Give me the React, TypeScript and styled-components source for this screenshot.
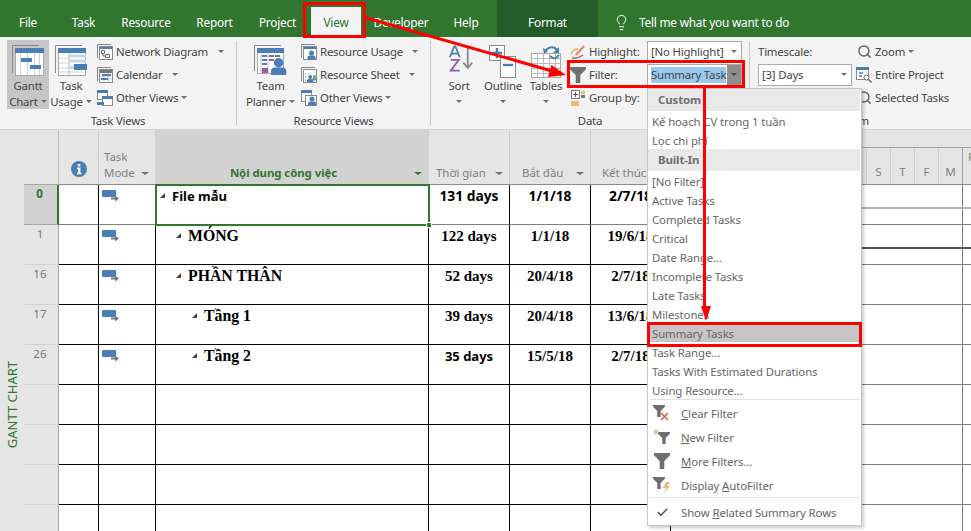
import React from "react";
import styled, { createGlobalStyle } from "styled-components";
import { Check, Lightbulb, Search } from "lucide-react";

const GREEN = "#31752f";
const BLUE = "#4a7eb5";
const GRAY = "#6f6f6f";

const GlobalStyle = createGlobalStyle`
    html, body { margin: 0; padding: 0; background: #fff; }
    * { box-sizing: border-box; }
`;

const Page = styled.div`
    position: relative;
    width: 971px;
    height: 531px;
    overflow: hidden;
    font-family: "Noto Sans", "Open Sans", sans-serif;
    font-size: 11.4px;
    letter-spacing: -0.2px;
    color: #444;
`;

/* ---------- tabs ---------- */

const TabBar = styled.div`
    display: flex;
    height: 37px;
    background: ${GREEN};
`;

const Tab = styled.div<{ $width: number; $active?: boolean; $dark?: boolean; $gap?: number }>`
    width: ${p => p.$width}px;
    margin-left: ${p => p.$gap || 0}px;
    margin-top: ${p => (p.$active ? 7 : 0)}px;
    padding-top: ${p => (p.$active ? 7 : 14)}px;
    text-align: center;
    line-height: 16px;
    font-size: 11.8px;
    color: ${p => (p.$active ? GREEN : "#fff")};
    background: ${p => (p.$active ? "#f3f3f3" : p.$dark ? "#235c2a" : "transparent")};
`;

const TellMe = styled.div`
    display: flex;
    align-items: center;
    gap: 9px;
    margin-left: 15px;
    padding-top: 7px;
    height: 37px;
    color: #fff;
    font-size: 11.8px;
`;

/* ---------- ribbon ---------- */

const Ribbon = styled.div`
    display: flex;
    height: 93px;
    padding-top: 3px;
    background: #f3f3f3;
    border-bottom: 1px solid #d4d4d4;
`;

const Group = styled.div<{ $width: number }>`
    display: flex;
    flex-direction: column;
    width: ${p => p.$width}px;
`;

const GroupBody = styled.div<{ $pad: number }>`
    display: flex;
    height: 69px;
    padding-left: ${p => p.$pad}px;
`;

const GroupLabel = styled.div`
    margin-top: 4px;
    line-height: 16px;
    text-align: center;
    white-space: nowrap;
`;

const Divider = styled.div`
    width: 1px;
    height: 84px;
    margin-top: 1px;
    background: #c8c8c8;
`;

const LargeButton = styled.div<{ $width: number; $active?: boolean; $gap?: number }>`
    display: flex;
    flex-direction: column;
    align-items: center;
    flex: none;
    width: ${p => p.$width}px;
    height: 69px;
    margin-right: ${p => p.$gap || 0}px;
    padding-top: 5px;
    background: ${p => (p.$active ? "#c6c6c6" : "transparent")};
`;

const IconSlot = styled.div<{ $shift?: number }>`
    display: flex;
    align-items: flex-start;
    justify-content: center;
    height: 33px;
    padding-left: ${p => p.$shift || 0}px;
`;

const ButtonLine = styled.div`
    display: flex;
    align-items: center;
    justify-content: center;
    height: 16px;
    white-space: nowrap;
`;

const Caret = styled.span<{ $gap?: number; $color?: string; $size?: number }>`
    display: inline-block;
    flex: none;
    margin-left: ${p => p.$gap ?? 3}px;
    border-left: ${p => p.$size || 3}px solid transparent;
    border-right: ${p => p.$size || 3}px solid transparent;
    border-top: ${p => (p.$size ? p.$size - 1 : 3)}px solid ${p => p.$color || GRAY};
`;

const SmallList = styled.div`
    display: flex;
    flex-direction: column;
`;

const SmallItem = styled.div`
    display: flex;
    align-items: center;
    gap: 3px;
    height: 23px;
    white-space: nowrap;
`;

const IconBox = styled.span`
    display: flex;
    align-items: center;
    justify-content: center;
    flex: none;
    width: 16px;
    height: 16px;
`;

const FormRow = styled.div`
    display: flex;
    align-items: center;
    height: 23px;
`;

const FormIcon = styled.span`
    display: flex;
    justify-content: center;
    flex: none;
    width: 18px;
    margin-left: 2px;
`;

const FormLabel = styled.span`
    flex: none;
    width: 58px;
    margin-left: 2px;
`;

const Combo = styled.div<{ $width: number }>`
    display: flex;
    align-items: center;
    justify-content: space-between;
    flex: none;
    width: ${p => p.$width}px;
    height: 22px;
    padding-left: 3px;
    background: #fff;
    border: 1px solid #ababab;
    white-space: nowrap;
`;

const ComboCaretBox = styled.span<{ $active?: boolean }>`
    display: flex;
    align-items: center;
    justify-content: center;
    flex: none;
    align-self: stretch;
    width: 14px;
    background: ${p => (p.$active ? "#8e8e8e" : "transparent")};
`;

const Selection = styled.span`
    background: #99c9ef;
    line-height: 16px;
    white-space: nowrap;
`;

const Column = styled.div<{ $width?: number; $gap?: number }>`
    display: flex;
    flex-direction: column;
    flex: none;
    width: ${p => (p.$width ? `${p.$width}px` : "auto")};
    margin-right: ${p => p.$gap || 0}px;
`;

/* ---------- sheet ---------- */

const Sheet = styled.div`
    display: flex;
    height: 401px;
`;

const SideStrip = styled.div`
    display: flex;
    justify-content: center;
    align-items: flex-end;
    flex: none;
    width: 24px;
    padding-bottom: 83px;
    background: #e5e5e5;
`;

const SideText = styled.div`
    writing-mode: vertical-rl;
    transform: rotate(180deg);
    color: ${GREEN};
    font-size: 13px;
    letter-spacing: 0;
    line-height: 14px;
    white-space: nowrap;
`;

const Table = styled.div`
    display: grid;
    grid-template-columns: 35px 40px 57px 273px 81px 81px 80px;
    grid-auto-rows: 40px;
    grid-template-rows: 55px;
    flex: none;
    width: 647px;
    background: #fff;
    letter-spacing: 0;
`;

const HeadCell = styled.div<{ $pad?: number; $active?: boolean }>`
    display: flex;
    flex-direction: column;
    justify-content: flex-end;
    padding: 0 6px 3px ${p => p.$pad ?? 5}px;
    background: ${p => (p.$active ? "#d2d2d2" : "#e5e5e5")};
    border-right: 1px solid #d0d0d0;
    border-bottom: 1px solid #8c8c8c;
    color: #7f7f7f;
    line-height: 16px;
    font-size: 11.5px;
    letter-spacing: -0.05px;
`;

const CornerCell = styled(HeadCell)`
    border-right: 1px solid #bdbdbd;
    border-bottom: 1px solid #a6a6a6;
`;

const InfoCell = styled(HeadCell)`
    align-items: center;
    padding: 0 0 7px;
`;

const HeadLine = styled.div`
    display: flex;
    align-items: center;
    justify-content: space-between;
    white-space: nowrap;
`;

const NameHeading = styled.span`
    flex: 1;
    text-align: center;
    color: ${GREEN};
    font-weight: 700;
    font-size: 11.4px;
`;

const RowHead = styled.div<{ $selected?: boolean; $last?: boolean }>`
    padding-right: 2px;
    text-align: center;
    line-height: 18px;
    font-size: 11.6px;
    font-weight: ${p => (p.$selected ? 700 : 400)};
    color: ${p => (p.$selected ? GREEN : "#7a7a7a")};
    background: ${p => (p.$selected ? "#d2d2d2" : "#e5e5e5")};
    border-right: ${p => (p.$selected ? `2px solid ${GREEN}` : "1px solid #a6a6a6")};
    border-bottom: 1px solid ${p => (p.$selected ? "#a6a6a6" : "#d0d0d0")};
`;

const Cell = styled.div<{ $soft?: boolean }>`
    border-right: 1px solid #000;
    border-bottom: 1px solid ${p => (p.$soft ? "#808080" : "#000")};
`;

const ModeCell = styled(Cell)`
    padding: 5px 0 0 3px;
`;

const ValueCell = styled(Cell)<{ $font: "sans" | "serif" | "small" }>`
    text-align: center;
    line-height: 22px;
    white-space: nowrap;
    color: #000;
    font-weight: 700;
    font-family: ${p => (p.$font === "serif" ? '"Liberation Serif", serif' : '"Noto Sans", sans-serif')};
    font-size: ${p => (p.$font === "serif" ? 15 : p.$font === "small" ? 13 : 13.8)}px;
`;

const NameCell = styled(Cell)<{ $level: number; $selected?: boolean; $serif?: boolean }>`
    position: relative;
    display: flex;
    align-items: flex-start;
    padding-left: ${p => 4 + p.$level * 16}px;
    line-height: 22px;
    color: #000;
    font-weight: 700;
    font-family: ${p => (p.$serif ? '"Liberation Serif", serif' : '"Noto Sans", sans-serif')};
    font-size: ${p => (p.$serif ? 15.8 : 13)}px;
    ${p => (p.$selected ? `outline: 2px solid ${GREEN}; outline-offset: -1px; z-index: 1;` : "")}
`;

const FillHandle = styled.span`
    position: absolute;
    right: -4px;
    bottom: -4px;
    width: 6px;
    height: 6px;
    background: ${GREEN};
    border: 1px solid #fff;
`;

const Twist = styled.span`
    flex: none;
    width: 5px;
    height: 5px;
    margin: 8px 7px 0 0;
    background: #444;
    clip-path: polygon(100% 0, 100% 100%, 0 100%);
`;

/* ---------- gantt ---------- */

const Gantt = styled.div`
    flex: 1;
    display: flex;
    flex-direction: column;
    min-width: 0;
`;

const GanttTier = styled.div`
    height: 18px;
    background: #e5e5e5;
    border-bottom: 1px solid #a0a0a0;
    flex: none;
`;

const DayRow = styled.div`
    display: flex;
    justify-content: flex-end;
    flex: none;
    height: 37px;
    background: #e5e5e5;
    border-bottom: 1px solid #8c8c8c;
    color: #7f7f7f;
    font-size: 11.6px;
    letter-spacing: 0;
`;

const Day = styled.div`
    width: 24px;
    padding-top: 16px;
    text-align: center;
    line-height: 16px;
    border-left: 1px solid #cfcfcf;
`;

const WeekStart = styled.div`
    width: 9px;
    padding: 1px 0 0 5px;
    line-height: 16px;
    overflow: hidden;
    border-left: 1px solid #a0a0a0;
`;

const GanttBody = styled.div`
    flex: 1;
    background: linear-gradient(#7f7f7f, #7f7f7f) no-repeat right 8px top / 1px 100%;
`;

const GanttRow = styled.div`
    height: 40px;
    padding-top: 22px;
    border-bottom: 1px solid #808080;
`;

const SummaryBar = styled.div<{ $color: string }>`
    height: 2px;
    background: ${p => p.$color};
`;

/* ---------- filter menu ---------- */

const Menu = styled.div`
    position: absolute;
    left: 647px;
    top: 88px;
    z-index: 2;
    width: 215px;
    height: 438px;
    background: #fff;
    border: 1px solid #c6c6c6;
    box-shadow: 2px 2px 3px rgba(0, 0, 0, 0.2);
    color: #666;
    font-size: 11.4px;
    letter-spacing: -0.1px;
`;

const MenuHead = styled.div`
    height: 22px;
    margin-right: 1px;
    padding-left: 10px;
    line-height: 22px;
    font-weight: 700;
    color: #6e6e6e;
    background: #e9e9e9;
`;

const MenuItem = styled.div<{ $active?: boolean }>`
    height: 19px;
    padding-left: 4px;
    line-height: 21px;
    white-space: nowrap;
    background: ${p => (p.$active ? "#c6c6c6" : "transparent")};
`;

const MenuSeparator = styled.div`
    height: 1px;
    margin: 0 1px 1px 2px;
    background: #e2e2e2;
`;

const CommandItem = styled.div<{ $tall?: boolean }>`
    display: flex;
    align-items: center;
    height: ${p => (p.$tall ? 26 : 24)}px;
    white-space: nowrap;
`;

const CommandIcon = styled.span`
    display: flex;
    justify-content: center;
    flex: none;
    width: 33px;
    padding-right: 5px;
`;

const Annotations = styled.svg`
    position: absolute;
    left: 0;
    top: 0;
    z-index: 3;
    pointer-events: none;
`;

/* ---------- icons ---------- */

const Frame = () => <path d="M.5 14V.5H14" fill="none" stroke="#8a8a8a" />;

const NetworkIcon = () => (
    <svg width="16" height="16" viewBox="0 0 16 16">
        <Frame />
        <rect x="2.5" y="2.5" width="13" height="13" fill="#fff" stroke="#8a8a8a" />
        <rect x="3" y="3" width="12" height="2" fill={BLUE} />
        <path d="M4.5 6.5h3v3h-3zM8.5 10.5h4v3h-4zM6 9.5V12h2.5" fill="none" stroke="#666" />
    </svg>
);

const CalendarIcon = () => (
    <svg width="16" height="16" viewBox="0 0 16 16">
        <Frame />
        <rect x="2.5" y="2.5" width="13" height="13" fill="#fff" stroke="#8a8a8a" />
        <rect x="3" y="3" width="12" height="3" fill="#777" />
        <path d="M3 9h12M3 12h12M7 6v9M11 6v9" stroke="#c8c8c8" />
        <rect x="5" y="7" width="9" height="2" fill={BLUE} />
        <rect x="4" y="11" width="7" height="2" fill={BLUE} />
    </svg>
);

const OtherViewsIcon = () => (
    <svg width="16" height="16" viewBox="0 0 16 16">
        <rect x=".5" y=".5" width="10" height="9" fill="#fff" stroke="#8a8a8a" />
        <rect x="0" y="0" width="11" height="3" fill={BLUE} />
        <rect x="5.5" y="6.5" width="10" height="9" fill="#fff" stroke="#8a8a8a" />
        <rect x="5" y="6" width="11" height="3" fill={BLUE} />
        <rect x="0" y="12" width="7" height="3" fill={BLUE} />
    </svg>
);

const Person = ({ x, y, s = 1, color = BLUE }: { x: number; y: number; s?: number; color?: string }) => (
    <g transform={`translate(${x} ${y}) scale(${s})`} fill={color}>
        <circle cx="4" cy="2.5" r="2.5" />
        <path d="M0 9V7q0-2 2-2h4q2 0 2 2v2z" />
    </g>
);

const ResourceUsageIcon = () => (
    <svg width="16" height="16" viewBox="0 0 16 16">
        <Frame />
        <rect x="2.5" y="2.5" width="13" height="13" fill="#fff" stroke="#8a8a8a" />
        <rect x="3" y="3" width="12" height="2" fill={BLUE} />
        <Person x={6.5} y={6.5} />
    </svg>
);

const ResourceSheetIcon = () => (
    <svg width="16" height="16" viewBox="0 0 16 16">
        <Frame />
        <rect x="2.5" y="2.5" width="13" height="13" fill="#fff" stroke="#8a8a8a" />
        <path d="M4 7h1M4 10h1M4 13h1M7 7h1" stroke="#777" />
        <Person x={6} y={8} s={0.8} />
        <Person x={11} y={8} s={0.6} color="#5f9f84" />
    </svg>
);

const ResourceOtherIcon = () => (
    <svg width="16" height="16" viewBox="0 0 16 16">
        <rect x=".5" y=".5" width="10" height="11" fill="#fff" stroke="#8a8a8a" />
        <rect x="0" y="0" width="11" height="3" fill={BLUE} />
        <rect x="4.5" y="5.5" width="11" height="10" fill="#fff" stroke="#8a8a8a" />
        <Person x={7} y={6.5} />
    </svg>
);

const GanttChartIcon = () => (
    <svg width="32" height="33" viewBox="0 0 32 33">
        <path d="M.5 28V.5H27" fill="none" stroke="#8a8a8a" />
        <rect x="3.5" y="3.5" width="28" height="27" fill="#fff" stroke="#a8a8a8" />
        <rect x="3" y="3" width="29" height="5" fill={BLUE} />
        <path d="M8.5 8v22M15.5 8v22M22.5 8v22M27.5 8v22" stroke="#d2d2d2" />
        <rect x="9" y="13" width="11" height="4" fill={BLUE} />
        <rect x="18" y="20" width="11" height="4" fill={BLUE} />
    </svg>
);

const TaskUsageIcon = () => (
    <svg width="33" height="33" viewBox="0 0 33 33">
        <path d="M.5 28V.5H27" fill="none" stroke="#8a8a8a" />
        <rect x="3.5" y="3.5" width="27" height="27" fill="#fff" stroke="#a8a8a8" />
        <rect x="3" y="3" width="28" height="5" fill={BLUE} />
        <path d="M14 8v22" stroke="#b8b8b8" />
        <path d="M14 11h17M14 16h17" stroke="#c6d6e8" strokeWidth="3" />
        <path d="M4 13h10M4 18h10M4 23h10M4 27h24" stroke="#d2d2d2" />
        <rect x="14" y="21" width="5" height="3" fill="#c6d6e8" />
        <rect x="19" y="19" width="13" height="6" fill={BLUE} />
    </svg>
);

const TeamPlannerIcon = () => (
    <svg width="33" height="31" viewBox="0 0 33 31">
        <path d="M.5 26V.5H27" fill="none" stroke="#8a8a8a" />
        <rect x="3.5" y="3.5" width="26" height="25" fill="#fff" stroke="#a8a8a8" />
        <rect x="3" y="3" width="27" height="5" fill={BLUE} />
        <path d="M7 8v21M14 8v21" stroke="#bdbdbd" />
        <path d="M8 11h5M8 15h5M8 19h5" stroke={BLUE} strokeWidth="2" />
        <path d="M15 11h5M15 15h5" stroke="#9060a8" strokeWidth="2" />
        <path d="M21 11h5" stroke="#777" strokeWidth="2" />
        <rect x="8" y="23" width="6" height="5" fill="#9060a8" />
        <Person x={17} y={13} s={1.9} />
    </svg>
);

const SortIcon = () => (
    <svg width="25" height="28" viewBox="0 0 28 30">
        <path d="M1 13 5.8 1h1.4L12 13M3 9h7" fill="none" stroke={BLUE} strokeWidth="2" />
        <path d="M2 16h9L2 28h10" fill="none" stroke="#9060a8" strokeWidth="2" />
        <path d="M21 1v24M16 19l5 6 5-6" fill="none" stroke="#8a8a8a" strokeWidth="2" />
    </svg>
);

const OutlineIcon = () => (
    <svg width="28" height="33" viewBox="0 0 28 33">
        <rect x=".5" y=".5" width="15" height="15" fill="#fff" stroke="#8a8a8a" />
        <path d="M3 8h10M8 3v10" stroke={BLUE} strokeWidth="2.4" />
        <rect x="11.5" y="11.5" width="15" height="21" fill="#fff" stroke="#8a8a8a" />
        <path d="M14 20h10" stroke={BLUE} strokeWidth="2.4" />
    </svg>
);

const TablesIcon = () => (
    <svg width="31" height="33" viewBox="0 0 31 33">
        <rect x=".5" y="8.5" width="29" height="24" fill="#fff" stroke="#a8a8a8" />
        <path d="M6.5 8v24M12.5 8v24M18.5 8v24M24.5 8v24M0 13.5h30M0 18.5h30M0 23.5h30M0 28.5h30" stroke="#b8b8b8" />
        <path d="M15 5q4-4 9-2l3 3M19 11q3 3 6 2l3-3" fill="none" stroke={BLUE} strokeWidth="2" />
        <path d="M28 2v6h-6M12 3l5 3-4 3" fill={BLUE} />
    </svg>
);

const HighlightIcon = () => (
    <svg width="18" height="14" viewBox="0 0 18 14">
        <path d="M2 9q2-5 7-5" fill="none" stroke="#e8b88a" strokeWidth="2" />
        <path d="M7 10 15 1" stroke="#e58d6a" strokeWidth="2.4" />
        <path d="M3 13q6 1 11-3" fill="none" stroke="#d8553a" strokeWidth="1.4" />
    </svg>
);

const Funnel = ({ color = GRAY }: { color?: string }) => (
    <path d="M0 0H14V2L9 7V14H5V7L0 2Z" fill={color} />
);

const FunnelIcon = () => (
    <svg width="16" height="16" viewBox="0 0 14 14">
        <Funnel />
    </svg>
);

const GroupByIcon = () => (
    <svg width="14" height="16" viewBox="0 0 14 16">
        <rect x=".5" y=".5" width="8" height="8" fill="#fff" stroke="#777" />
        <path d="M2 4.5h5M4.5 2v5" stroke="#555" />
        <rect x="10" y="1" width="4" height="3" fill="#e6bd7c" />
        <rect x="10" y="5" width="4" height="3" fill="#777" />
        <rect x="0" y="11" width="8" height="5" fill="#e6bd7c" />
    </svg>
);

const EntireProjectIcon = () => (
    <svg width="16" height="16" viewBox="0 0 16 16">
        <rect x=".5" y=".5" width="12" height="12" fill="#fff" stroke="#8a8a8a" />
        <rect x="0" y="0" width="13" height="3" fill={BLUE} />
        <path d="M3 6h4M3 9h3" stroke={BLUE} strokeWidth="1.4" />
        <circle cx="10.5" cy="10.5" r="2.5" fill="#fff" stroke="#666" />
        <path d="M12.5 12.5 15.5 15.5" stroke="#666" strokeWidth="1.5" />
    </svg>
);

const ClearFilterIcon = () => (
    <svg width="18" height="16" viewBox="0 0 18 16">
        <g transform="scale(.85)">
            <Funnel />
        </g>
        <path d="M8 8l7 7M15 8l-7 7" stroke="#d8553a" strokeWidth="1.4" />
    </svg>
);

const NewFilterIcon = () => (
    <svg width="18" height="16" viewBox="0 0 18 16">
        <g transform="translate(5 3) scale(.85)">
            <Funnel />
        </g>
        <path d="M3 0v6M0 3h6M1 1l4 4M5 1 1 5" stroke="#e6bd7c" />
    </svg>
);

const MoreFiltersIcon = () => (
    <svg width="16" height="16" viewBox="0 0 14 14">
        <Funnel />
    </svg>
);

const AutoFilterIcon = () => (
    <svg width="18" height="16" viewBox="0 0 18 16">
        <g transform="scale(.85)">
            <Funnel />
        </g>
        <path d="M13 5h4l-3 4h3l-6 7 2-5h-3z" fill="#e6bd7c" />
    </svg>
);

const ModeIcon = () => (
    <svg width="17" height="12" viewBox="0 0 17 12" style={{ display: "block" }}>
        <rect x="0" y="0" width="14" height="7" rx="1" fill={BLUE} />
        <path d="M9 8.5h6" stroke="#777" strokeWidth="2" />
        <path d="M13 5.5l4 3-4 3z" fill="#777" />
    </svg>
);

const InfoIcon = () => (
    <svg width="16" height="16" viewBox="0 0 16 16">
        <circle cx="8" cy="8" r="8" fill={BLUE} />
        <rect x="6.8" y="3" width="2.6" height="2.4" fill="#fff" />
        <path d="M6 6.6h3.4v5.2h1v1.4H6v-1.4h1V8H6z" fill="#fff" />
    </svg>
);

/* ---------- data ---------- */

type Row = {
    id: string;
    name: string;
    level: number;
    duration: string;
    start: string;
    finish: string;
    durationFont: "sans" | "serif" | "small";
    dateFont: "sans" | "serif";
};

const rows: Row[] = [
    { id: "0", name: "File mẫu", level: 0, duration: "131 days", start: "1/1/18", finish: "2/7/18", durationFont: "sans", dateFont: "sans" },
    { id: "1", name: "MÓNG", level: 1, duration: "122 days", start: "1/1/18", finish: "19/6/18", durationFont: "serif", dateFont: "serif" },
    { id: "16", name: "PHẦN THÂN", level: 1, duration: "52 days", start: "20/4/18", finish: "2/7/18", durationFont: "serif", dateFont: "serif" },
    { id: "17", name: "Tầng 1", level: 2, duration: "39 days", start: "20/4/18", finish: "13/6/18", durationFont: "serif", dateFont: "serif" },
    { id: "26", name: "Tầng 2", level: 2, duration: "35 days", start: "15/5/18", finish: "2/7/18", durationFont: "small", dateFont: "serif" },
];

const filters = ["[No Filter]", "Active Tasks", "Completed Tasks", "Critical", "Date Range...", "Incomplete Tasks", "Late Tasks", "Milestones"];
const afterFilters = ["Task Range...", "Tasks With Estimated Durations", "Using Resource..."];

const tabs = [
    { label: "File", width: 56 },
    { label: "Task", width: 55 },
    { label: "Resource", width: 70 },
    { label: "Report", width: 67 },
    { label: "Project", width: 59 },
];

const App: React.FC = () => {
    return (
        <Page>
            <GlobalStyle />
            <TabBar>
                {tabs.map((t) => (
                    <Tab key={t.label} $width={t.width}>{t.label}</Tab>
                ))}
                <Tab $width={50} $gap={4} $active>View</Tab>
                <Tab $width={80}>Developer</Tab>
                <Tab $width={50}>Help</Tab>
                <Tab $width={101} $gap={6} $dark>Format</Tab>
                <TellMe>
                    <Lightbulb size={17} strokeWidth={1.4} color="#fff" />
                    Tell me what you want to do
                </TellMe>
            </TabBar>

            <Ribbon>
                <Group $width={236}>
                    <GroupBody $pad={7}>
                        <LargeButton $width={42} $gap={1} $active>
                            <IconSlot><GanttChartIcon /></IconSlot>
                            <ButtonLine>Gantt</ButtonLine>
                            <ButtonLine>Chart<Caret /></ButtonLine>
                        </LargeButton>
                        <LargeButton $width={42} $gap={5}>
                            <IconSlot><TaskUsageIcon /></IconSlot>
                            <ButtonLine>Task</ButtonLine>
                            <ButtonLine>Usage<Caret /></ButtonLine>
                        </LargeButton>
                        <SmallList>
                            <SmallItem><IconBox><NetworkIcon /></IconBox>Network Diagram<Caret $gap={7} /></SmallItem>
                            <SmallItem><IconBox><CalendarIcon /></IconBox>Calendar<Caret $gap={6} /></SmallItem>
                            <SmallItem><IconBox><OtherViewsIcon /></IconBox>Other Views<Caret $gap={0} /></SmallItem>
                        </SmallList>
                    </GroupBody>
                    <GroupLabel>Task Views</GroupLabel>
                </Group>
                <Divider />
                <Group $width={193}>
                    <GroupBody $pad={8}>
                        <LargeButton $width={51} $gap={5}>
                            <IconSlot><TeamPlannerIcon /></IconSlot>
                            <ButtonLine>Team</ButtonLine>
                            <ButtonLine>Planner<Caret /></ButtonLine>
                        </LargeButton>
                        <SmallList>
                            <SmallItem><IconBox><ResourceUsageIcon /></IconBox>Resource Usage<Caret $gap={6} /></SmallItem>
                            <SmallItem><IconBox><ResourceSheetIcon /></IconBox>Resource Sheet<Caret $gap={6} /></SmallItem>
                            <SmallItem><IconBox><ResourceOtherIcon /></IconBox>Other Views<Caret $gap={0} /></SmallItem>
                        </SmallList>
                    </GroupBody>
                    <GroupLabel>Resource Views</GroupLabel>
                </Group>
                <Divider />
                <Group $width={318}>
                    <GroupBody $pad={6}>
                        <LargeButton $width={44}>
                            <IconSlot $shift={5}><SortIcon /></IconSlot>
                            <ButtonLine>Sort</ButtonLine>
                            <ButtonLine><Caret $gap={0} /></ButtonLine>
                        </LargeButton>
                        <LargeButton $width={44}>
                            <IconSlot><OutlineIcon /></IconSlot>
                            <ButtonLine>Outline</ButtonLine>
                            <ButtonLine><Caret $gap={0} /></ButtonLine>
                        </LargeButton>
                        <LargeButton $width={42}>
                            <IconSlot><TablesIcon /></IconSlot>
                            <ButtonLine>Tables</ButtonLine>
                            <ButtonLine><Caret $gap={0} /></ButtonLine>
                        </LargeButton>
                        <SmallList>
                            <FormRow>
                                <FormIcon><HighlightIcon /></FormIcon>
                                <FormLabel>Highlight:</FormLabel>
                                <Combo $width={95}>[No Highlight]<ComboCaretBox><Caret $gap={0} /></ComboCaretBox></Combo>
                            </FormRow>
                            <FormRow>
                                <FormIcon><FunnelIcon /></FormIcon>
                                <FormLabel>Filter:</FormLabel>
                                <Combo $width={95}><Selection>Summary Task</Selection><ComboCaretBox $active><Caret $gap={0} $color="#444" /></ComboCaretBox></Combo>
                            </FormRow>
                            <FormRow>
                                <FormIcon><GroupByIcon /></FormIcon>
                                <FormLabel>Group by:</FormLabel>
                            </FormRow>
                        </SmallList>
                    </GroupBody>
                    <GroupLabel>Data</GroupLabel>
                </Group>
                <Divider />
                <Group $width={208}>
                    <GroupBody $pad={8}>
                        <Column $width={94} $gap={4}>
                            <SmallList>
                                <FormRow>Timescale:</FormRow>
                                <FormRow><Combo $width={94}>[3] Days<ComboCaretBox><Caret $gap={0} /></ComboCaretBox></Combo></FormRow>
                            </SmallList>
                        </Column>
                        <SmallList>
                            <SmallItem><IconBox><Search size={15} color="#666" strokeWidth={2.4} /></IconBox>Zoom<Caret $gap={0} /></SmallItem>
                            <SmallItem><IconBox><EntireProjectIcon /></IconBox>Entire Project</SmallItem>
                            <SmallItem><IconBox><Search size={15} color="#666" strokeWidth={2.4} /></IconBox>Selected Tasks</SmallItem>
                        </SmallList>
                    </GroupBody>
                    <GroupLabel>Zoom</GroupLabel>
                </Group>
            </Ribbon>

            <Sheet>
                <SideStrip><SideText>GANTT CHART</SideText></SideStrip>
                <Table>
                    <CornerCell />
                    <InfoCell><InfoIcon /></InfoCell>
                    <HeadCell>
                        <HeadLine>Task</HeadLine>
                        <HeadLine>Mode<Caret $size={4} /></HeadLine>
                    </HeadCell>
                    <HeadCell $active $pad={0}>
                        <HeadLine><NameHeading>Nội dung công việc</NameHeading><Caret $size={4} $color={GREEN} /></HeadLine>
                    </HeadCell>
                    <HeadCell $pad={7}><HeadLine>Thời gian<Caret $size={4} /></HeadLine></HeadCell>
                    <HeadCell $pad={12}><HeadLine>Bắt đầu<Caret $size={4} /></HeadLine></HeadCell>
                    <HeadCell $pad={11}><HeadLine>Kết thúc<Caret $size={4} /></HeadLine></HeadCell>

                    {rows.map((r, i) => (
                        <React.Fragment key={r.id}>
                            <RowHead $selected={i === 0}>{r.id}</RowHead>
                            <Cell $soft={i === 0} />
                            <ModeCell $soft={i === 0}><ModeIcon /></ModeCell>
                            <NameCell $level={r.level} $selected={i === 0} $serif={i > 0} $soft={i === 0}>
                                <Twist />{r.name}
                                {i === 0 && <FillHandle />}
                            </NameCell>
                            <ValueCell $font={r.durationFont} $soft={i === 0}>{r.duration}</ValueCell>
                            <ValueCell $font={r.dateFont} $soft={i === 0}>{r.start}</ValueCell>
                            <ValueCell $font={r.dateFont} $soft={i === 0}>{r.finish}</ValueCell>
                        </React.Fragment>
                    ))}
                    {[0, 1, 2, 3].map((n) => (
                        <React.Fragment key={n}>
                            <RowHead />
                            <Cell />
                            <Cell />
                            <Cell />
                            <Cell />
                            <Cell />
                            <Cell />
                        </React.Fragment>
                    ))}
                </Table>
                <Gantt>
                    <GanttTier />
                    <DayRow>
                        <Day>S</Day>
                        <Day>T</Day>
                        <Day>F</Day>
                        <Day>M</Day>
                        <WeekStart>F</WeekStart>
                    </DayRow>
                    <GanttBody>
                        <GanttRow><SummaryBar $color="#b5b5b5" /></GanttRow>
                        <GanttRow><SummaryBar $color="#555" /></GanttRow>
                        {[0, 1, 2, 3, 4, 5, 6].map((n) => <GanttRow key={n} />)}
                    </GanttBody>
                </Gantt>
            </Sheet>

            <Menu>
                <MenuHead>Custom</MenuHead>
                <MenuItem>Kế hoạch CV trong 1 tuần</MenuItem>
                <MenuItem>Lọc chi phí</MenuItem>
                <MenuHead>Built-In</MenuHead>
                {filters.map((f) => <MenuItem key={f}>{f}</MenuItem>)}
                <MenuItem $active>Summary Tasks</MenuItem>
                {afterFilters.map((f) => <MenuItem key={f}>{f}</MenuItem>)}
                <MenuSeparator />
                <CommandItem><CommandIcon><ClearFilterIcon /></CommandIcon><span><u>C</u>lear Filter</span></CommandItem>
                <CommandItem><CommandIcon><NewFilterIcon /></CommandIcon><span><u>N</u>ew Filter</span></CommandItem>
                <CommandItem><CommandIcon><MoreFiltersIcon /></CommandIcon><span><u>M</u>ore Filters...</span></CommandItem>
                <CommandItem><CommandIcon><AutoFilterIcon /></CommandIcon><span>Display <u>A</u>utoFilter</span></CommandItem>
                <MenuSeparator />
                <CommandItem $tall><CommandIcon><Check size={13} color="#555" strokeWidth={3} /></CommandIcon><span>Show <u>R</u>elated Summary Rows</span></CommandItem>
            </Menu>

            <Annotations width="971" height="531" viewBox="0 0 971 531">
                <g fill="none" stroke="#f00" strokeWidth="3">
                    <rect x="304.5" y="3.5" width="60" height="33" />
                    <rect x="568.5" y="61.5" width="175" height="25" />
                    <rect x="648.5" y="323.5" width="212" height="22" />
                    <path d="M365 17.5 552 71" />
                    <path d="M704.5 88V308" />
                </g>
                <path d="M566 75 548 77 551.5 65Z" fill="#f00" />
                <path d="M706 321 701 306H711Z" fill="#f00" />
            </Annotations>
        </Page>
    );
};

export default App;
